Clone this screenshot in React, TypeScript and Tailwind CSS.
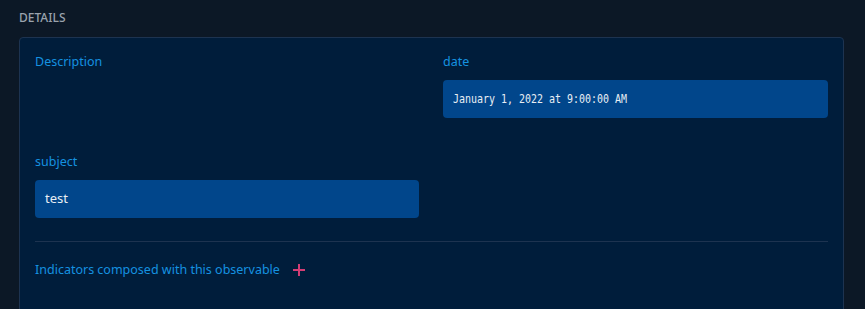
const Label = ({ children }: { children: string }) => (
  <div className="text-[12.5px] leading-[19px] text-[#1592e0]">{children}</div>
);

const Field = ({ label, value, mono }: { label: string; value: string; mono?: boolean }) => (
  <div>
    <Label>{label}</Label>
    <div className="mt-[9px] h-[38px] rounded-[4px] bg-[#01468b] px-[10px] flex items-center text-[#e8eef4]">
      {mono ? (
        <span className="inline-block origin-left scale-x-[0.83] whitespace-nowrap font-['DejaVu_Sans_Mono',monospace] text-[12px]">
          {value}
        </span>
      ) : (
        <span className="text-[13px]">{value}</span>
      )}
    </div>
  </div>
);

export default function App() {
  return (
    <div className="h-[309px] overflow-hidden bg-[#0c1826] pl-[19px] pr-[21px] pt-[10px] font-['Noto_Sans',sans-serif]">
      <h3 className="text-[12px] leading-[16px] font-medium uppercase text-[#9aa3ad]">Details</h3>
      <div className="mt-[11px] rounded-[4px] border border-[#1d3350] bg-[#001d3b] px-[15px] pt-[14px] pb-10">
        <div className="grid grid-cols-[384px_1fr] gap-x-6">
          <div>
            <Label>Description</Label>
          </div>
          <Field label="date" value="January 1, 2022 at 9:00:00 AM" mono />
        </div>
        <div className="mt-[34px] grid grid-cols-[384px_1fr] gap-x-6">
          <Field label="subject" value="test" />
          <div />
        </div>
        <div className="mt-[23px] border-t border-[#1d3350]" />
        <div className="mt-[18px] flex items-center gap-[13px]">
          <span className="text-[12.5px] leading-[19px] text-[#1592e0]">Indicators composed with this observable</span>
          <svg width="12" height="12" viewBox="0 0 12 12" className="text-[#d33d74]">
            <path d="M6 0v12M0 6h12" stroke="currentColor" strokeWidth="2" />
          </svg>
        </div>
      </div>
    </div>
  );
}
